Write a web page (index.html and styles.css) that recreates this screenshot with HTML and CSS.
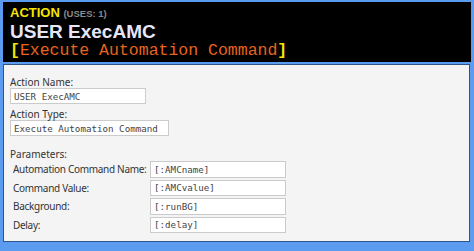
FILE: index.html
```html
<!DOCTYPE html>
<html lang="en">
<head>
    <meta charset="UTF-8">
    <title>Action: USER ExecAMC</title>
    <link rel="stylesheet" href="styles.css">
</head>
<body>
    <div class="header">
        <div class="kind">ACTION <span class="uses">(USES: 1)</span></div>
        <div class="name">USER ExecAMC</div>
        <div class="type"><span class="br">[</span>Execute Automation Command<span class="br">]</span></div>
    </div>
    <div class="panel">
        <div class="field">
            <label>Action Name:</label>
            <input type="text" class="name-input" value="USER ExecAMC" readonly>
        </div>
        <div class="field">
            <label>Action Type:</label>
            <input type="text" class="type-input" value="Execute Automation Command" readonly>
        </div>
        <div class="params">
            <label>Parameters:</label>
            <div class="param-grid">
                <span>Automation Command Name:</span>
                <input type="text" value="[:AMCname]" readonly>
                <span>Command Value:</span>
                <input type="text" value="[:AMCvalue]" readonly>
                <span>Background:</span>
                <input type="text" value="[:runBG]" readonly>
                <span>Delay:</span>
                <input type="text" value="[:delay]" readonly>
            </div>
        </div>
    </div>
</body>
</html>
```

FILE: styles.css
```css
body
{
    margin: 0;
    padding: 2px 3px 0 3px;
    background: #5c9cf0;
    height: 251px;
    box-sizing: border-box;
    font-family: "Noto Sans", "Open Sans", sans-serif;
}
.header
{
    background: #000;
    height: 60px;
    padding: 4px 0 0 7px;
    box-sizing: border-box;
    font-family: "Liberation Sans", Arial, sans-serif;
    font-weight: bold;
}
.kind
{
    color: #f5e600;
    font-size: 13px;
    line-height: 14px;
}
.uses
{
    color: #8a8a8a;
    font-size: 9.5px;
}
.name
{
    color: #e6e6f6;
    font-size: 19px;
    line-height: 21px;
}
.type
{
    font-family: "Liberation Mono", "DejaVu Sans Mono", monospace;
    font-weight: normal;
    font-size: 16.5px;
    line-height: 18px;
    color: #e8641c;
}
.br
{
    color: #f5e600;
    font-weight: bold;
}
.panel
{
    margin-top: 2px;
    margin-right: 1px;
    height: 178px;
    box-sizing: border-box;
    background: #f4f4f4;
    border: 1px solid #2f5486;
    padding: 11px 6px 0 6px;
    font-size: 10px;
    color: #333;
}
.field label, .params label
{
    display: block;
    line-height: 12px;
}
.field
{
    margin-bottom: 4px;
}
input
{
    font-family: "DejaVu Sans Mono", "Liberation Mono", monospace;
    font-size: 9.2px;
    color: #444;
    background: #fff;
    border: 1px solid #cbcbcb;
    height: 16px;
    padding: 0 3px;
    margin: 0;
    box-sizing: border-box;
    outline: none;
    display: block;
}
.name-input { width: 136px; }
.type-input { width: 159px; }
.params
{
    margin-top: 12px;
}
.param-grid
{
    display: grid;
    grid-template-columns: 137px 136px;
    grid-auto-rows: 16.5px;
    row-gap: 2px;
    padding-left: 3px;
    margin-top: 1px;
    align-items: center;
    white-space: nowrap;
    letter-spacing: -0.3px;
}
.param-grid input
{
    height: 16.5px;
    letter-spacing: 0;
}
```
